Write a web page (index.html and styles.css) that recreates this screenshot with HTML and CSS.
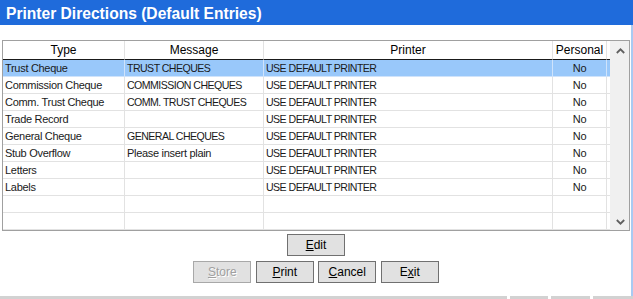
FILE: index.html
```html
<!DOCTYPE html>
<html>
<head>
<meta charset="utf-8">
<link rel="stylesheet" href="styles.css">
</head>
<body>
<div class="app">
  <div class="titlebar">Printer Directions (Default Entries)</div>
  <div class="main">
    <div class="gridbox">
      <div class="grid">
        <div class="row head">
          <div class="cell">Type</div>
          <div class="cell">Message</div>
          <div class="cell">Printer</div>
          <div class="cell">Personal</div>
          <div class="cell"></div>
        </div>
        <div class="row selected">
          <div class="cell">Trust Cheque</div>
          <div class="cell caps">TRUST CHEQUES</div>
          <div class="cell caps">USE DEFAULT PRINTER</div>
          <div class="cell c">No</div>
          <div class="cell"></div>
        </div>
        <div class="row">
          <div class="cell">Commission Cheque</div>
          <div class="cell caps">COMMISSION CHEQUES</div>
          <div class="cell caps">USE DEFAULT PRINTER</div>
          <div class="cell c">No</div>
          <div class="cell"></div>
        </div>
        <div class="row">
          <div class="cell">Comm. Trust Cheque</div>
          <div class="cell caps">COMM. TRUST CHEQUES</div>
          <div class="cell caps">USE DEFAULT PRINTER</div>
          <div class="cell c">No</div>
          <div class="cell"></div>
        </div>
        <div class="row">
          <div class="cell">Trade Record</div>
          <div class="cell"></div>
          <div class="cell caps">USE DEFAULT PRINTER</div>
          <div class="cell c">No</div>
          <div class="cell"></div>
        </div>
        <div class="row">
          <div class="cell">General Cheque</div>
          <div class="cell caps">GENERAL CHEQUES</div>
          <div class="cell caps">USE DEFAULT PRINTER</div>
          <div class="cell c">No</div>
          <div class="cell"></div>
        </div>
        <div class="row">
          <div class="cell">Stub Overflow</div>
          <div class="cell">Please insert plain</div>
          <div class="cell caps">USE DEFAULT PRINTER</div>
          <div class="cell c">No</div>
          <div class="cell"></div>
        </div>
        <div class="row">
          <div class="cell">Letters</div>
          <div class="cell"></div>
          <div class="cell caps">USE DEFAULT PRINTER</div>
          <div class="cell c">No</div>
          <div class="cell"></div>
        </div>
        <div class="row">
          <div class="cell">Labels</div>
          <div class="cell"></div>
          <div class="cell caps">USE DEFAULT PRINTER</div>
          <div class="cell c">No</div>
          <div class="cell"></div>
        </div>
        <div class="row">
          <div class="cell"></div><div class="cell"></div><div class="cell"></div><div class="cell"></div><div class="cell"></div>
        </div>
        <div class="row">
          <div class="cell"></div><div class="cell"></div><div class="cell"></div><div class="cell"></div><div class="cell"></div>
        </div>
      </div>
      <div class="vscroll">
        <div class="arrow up">
          <svg width="9" height="6" viewBox="0 0 9 6"><polyline points="0.8,5 4.5,1.3 8.2,5" fill="none" stroke="#606060" stroke-width="1.8"/></svg>
        </div>
        <div class="arrow down">
          <svg width="9" height="6" viewBox="0 0 9 6"><polyline points="0.8,1 4.5,4.7 8.2,1" fill="none" stroke="#606060" stroke-width="1.8"/></svg>
        </div>
      </div>
    </div>
    <div class="actions">
      <div class="btn-row">
        <button class="btn"><u>E</u>dit</button>
      </div>
      <div class="btn-row">
        <button class="btn disabled"><u>S</u>tore</button>
        <button class="btn"><u>P</u>rint</button>
        <button class="btn"><u>C</u>ancel</button>
        <button class="btn">E<u>x</u>it</button>
      </div>
    </div>
  </div>
  <div class="strip">
    <div class="seg wide"></div>
    <div class="seg s1"></div>
    <div class="seg s2"></div>
    <div class="seg s3"></div>
  </div>
</div>
</body>
</html>
```

FILE: styles.css
```css
* { box-sizing: border-box; }
html, body { margin: 0; padding: 0; background: #ffffff; }
body { font-family: "Liberation Sans", Arial, sans-serif; }

.app {
  width: 633px;
  height: 299px;
  display: flex;
  flex-direction: column;
  overflow: hidden;
}

.titlebar {
  height: 25px;
  background: #1f6bdb;
  color: #ffffff;
  font-weight: bold;
  font-size: 15.6px;
  line-height: 23px;
  padding: 2px 0 0 6px;
  white-space: nowrap;
}

.main {
  flex: 1;
  border-right: 2px solid #a9caf2;
  padding: 15px 1px 0 2px;
  display: flex;
  flex-direction: column;
}

.gridbox {
  display: flex;
  border: 1px solid #a0a0a0;
  width: 628px;
  background: #ffffff;
}

.grid {
  width: 607px;
  display: flex;
  flex-direction: column;
}

.row {
  display: grid;
  grid-template-columns: 122px 139px 289px 54px 3px;
  height: 17px;
}

.cell {
  border-right: 1px solid #e2e2e2;
  border-bottom: 1px solid #e2e2e2;
  font-size: 11px;
  letter-spacing: -0.3px;
  line-height: 16px;
  color: #1a1a1a;
  padding-left: 2px;
  white-space: nowrap;
  overflow: hidden;
}

.cell.caps {
  font-size: 10.6px;
  letter-spacing: -0.55px;
}

.cell:last-child { border-right: none; }

.cell.c { text-align: center; padding-left: 0; }

.row.head { height: 19px; }
.row.head .cell {
  border-bottom: 1px solid #1a1a1a;
  font-size: 12px;
  letter-spacing: 0;
  line-height: 18px;
  color: #000000;
  text-align: center;
  padding-left: 0;
}

.row.selected { background: #99c8fa; }
.row.selected .cell { border-right-color: #cfe3fb; border-bottom-color: #cfe3fb; }
.row.selected .cell:last-child { border-right: none; }

.vscroll {
  width: 19px;
  background: #f0f0f0;
  display: flex;
  flex-direction: column;
  justify-content: space-between;
}

.arrow {
  height: 17px;
  display: flex;
  justify-content: center;
}
.arrow svg { display: block; }
.arrow.up { align-items: flex-start; padding-top: 7px; padding-left: 1px; }
.arrow.down { align-items: flex-end; padding-bottom: 5px; padding-left: 1px; }

.actions {
  margin-top: 3px;
  display: flex;
  flex-direction: column;
  align-items: center;
  gap: 5px;
}

.btn-row {
  display: flex;
  gap: 4.5px;
}

.btn {
  width: 58px;
  height: 22px;
  margin: 0;
  padding: 0;
  border: 1px solid #707070;
  border-radius: 0;
  background: #e1e1e1;
  font-family: "Liberation Sans", Arial, sans-serif;
  font-size: 12px;
  line-height: 20px;
  color: #000000;
  text-align: center;
}

.btn u { text-decoration: underline; text-underline-offset: 1px; }

.btn.disabled {
  border-color: #a8a8a8;
  color: #a0a0a0;
  text-shadow: 1px 1px 0 #ffffff;
}

.strip {
  height: 3px;
  display: flex;
  gap: 3px;
  background: #ffffff;
}

.seg { background: #d2d2d2; height: 3px; }
.seg.wide { flex: 0 0 507px; }
.seg.s1 { flex: 0 0 38px; }
.seg.s2 { flex: 0 0 39px; }
.seg.s3 { flex: 1; }
```
